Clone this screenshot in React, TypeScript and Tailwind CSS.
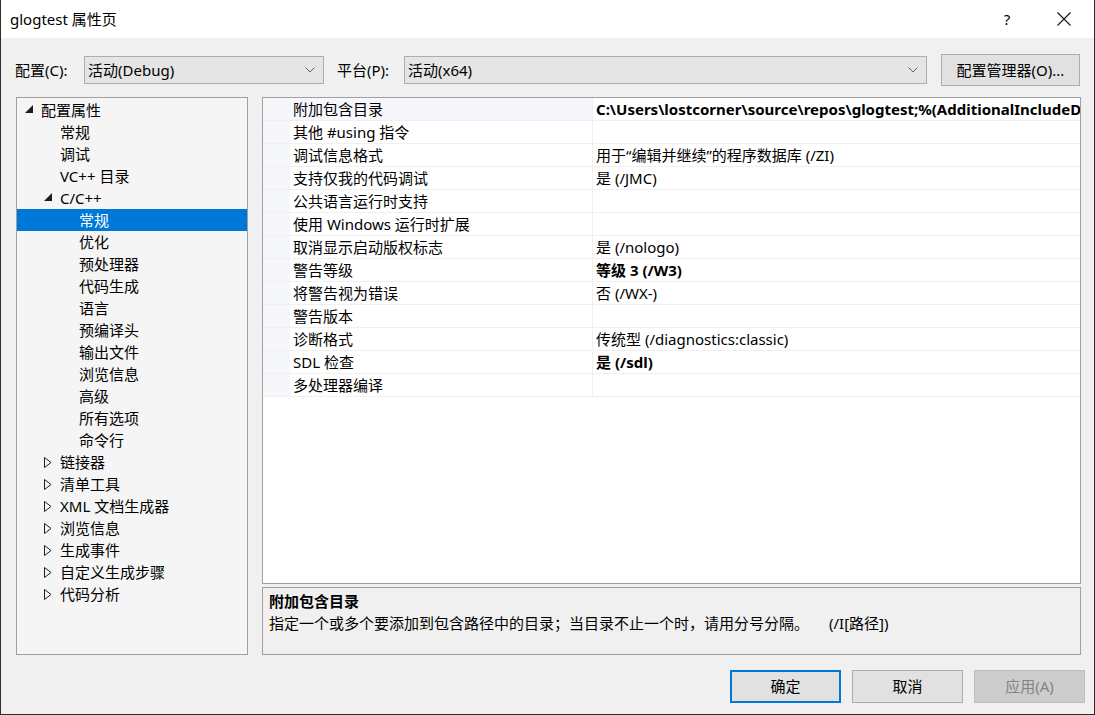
import React from "react";

const font = "font-['Segoe_UI','Noto_Sans','Noto_Sans_CJK_SC',sans-serif]";

type TreeItem = { t: string; pad: string; tri?: "open" | "closed"; sel?: boolean };

const tree: TreeItem[] = [
  { t: "配置属性", pad: "pl-[8px]", tri: "open" },
  { t: "常规", pad: "pl-[43px]" },
  { t: "调试", pad: "pl-[43px]" },
  { t: "VC++ 目录", pad: "pl-[43px]" },
  { t: "C/C++", pad: "pl-[27px]", tri: "open" },
  { t: "常规", pad: "pl-[62px]", sel: true },
  { t: "优化", pad: "pl-[62px]" },
  { t: "预处理器", pad: "pl-[62px]" },
  { t: "代码生成", pad: "pl-[62px]" },
  { t: "语言", pad: "pl-[62px]" },
  { t: "预编译头", pad: "pl-[62px]" },
  { t: "输出文件", pad: "pl-[62px]" },
  { t: "浏览信息", pad: "pl-[62px]" },
  { t: "高级", pad: "pl-[62px]" },
  { t: "所有选项", pad: "pl-[62px]" },
  { t: "命令行", pad: "pl-[62px]" },
  { t: "链接器", pad: "pl-[27px]", tri: "closed" },
  { t: "清单工具", pad: "pl-[27px]", tri: "closed" },
  { t: "XML 文档生成器", pad: "pl-[27px]", tri: "closed" },
  { t: "浏览信息", pad: "pl-[27px]", tri: "closed" },
  { t: "生成事件", pad: "pl-[27px]", tri: "closed" },
  { t: "自定义生成步骤", pad: "pl-[27px]", tri: "closed" },
  { t: "代码分析", pad: "pl-[27px]", tri: "closed" },
];

const props: { name: string; value: string; bold?: boolean }[] = [
  { name: "附加包含目录", value: "C:\\Users\\lostcorner\\source\\repos\\glogtest;%(AdditionalIncludeDirectories)", bold: true },
  { name: "其他 #using 指令", value: "" },
  { name: "调试信息格式", value: "用于“编辑并继续”的程序数据库 (/ZI)" },
  { name: "支持仅我的代码调试", value: "是 (/JMC)" },
  { name: "公共语言运行时支持", value: "" },
  { name: "使用 Windows 运行时扩展", value: "" },
  { name: "取消显示启动版权标志", value: "是 (/nologo)" },
  { name: "警告等级", value: "等级 3 (/W3)", bold: true },
  { name: "将警告视为错误", value: "否 (/WX-)" },
  { name: "警告版本", value: "" },
  { name: "诊断格式", value: "传统型 (/diagnostics:classic)" },
  { name: "SDL 检查", value: "是 (/sdl)", bold: true },
  { name: "多处理器编译", value: "" },
];

function Chevron() {
  return (
    <svg width="10" height="6" viewBox="0 0 10 6" className="shrink-0">
      <polyline points="0.5,0.5 5,5 9.5,0.5" fill="none" stroke="#606060" strokeWidth="1" />
    </svg>
  );
}

function Combo({ text, w }: { text: string; w: string }) {
  return (
    <div className={`${w} h-[28px] flex items-center justify-between bg-[#e5e5e5] border border-[#adadad] pl-[3px] pr-[8px]`}>
      <span>{text}</span>
      <Chevron />
    </div>
  );
}

function Tri({ kind }: { kind?: "open" | "closed" }) {
  if (!kind) return null;
  return (
    <span className="w-[16px] h-[22px] flex items-center shrink-0">
      {kind === "open" ? (
        <svg width="8" height="8" viewBox="0 0 8 8" className="mt-[-2px]">
          <polygon points="8,0 8,8 0,8" fill="#1e1e1e" />
        </svg>
      ) : (
        <svg width="8" height="11" viewBox="0 0 8 11">
          <polygon points="0.5,0.5 7,5.5 0.5,10.5" fill="none" stroke="#1e1e1e" strokeWidth="1" />
        </svg>
      )}
    </span>
  );
}

export default function App() {
  return (
    <div className={`${font} w-[1095px] h-[715px] bg-[#f0f0f0] text-[15px] text-black border-l border-r border-b border-[#2d2d2d] flex flex-col overflow-hidden`}>
      {/* title bar */}
      <div className="h-[38px] bg-white flex items-center shrink-0">
        <span className="ml-[9px] flex-1">glogtest 属性页</span>
        <span className="w-[20px] text-center mr-[40px] text-[15px]">?</span>
        <svg width="14" height="14" viewBox="0 0 14 14" className="mr-[23px]">
          <path d="M0.5 0.5 L13.5 13.5 M13.5 0.5 L0.5 13.5" stroke="#111" strokeWidth="1.1" />
        </svg>
      </div>

      {/* config row */}
      <div className="flex items-center h-[32px] mt-[16px] pl-[14px] shrink-0">
        <span className="w-[69px]">配置(C):</span>
        <Combo text="活动(Debug)" w="w-[240px]" />
        <span className="ml-[13px] w-[67px]">平台(P):</span>
        <Combo text="活动(x64)" w="w-[523px]" />
        <div className="ml-[14px] w-[139px] h-[32px] bg-[#e1e1e1] border border-[#adadad] flex items-center justify-center">
          配置管理器(O)...
        </div>
      </div>

      {/* main */}
      <div className="flex mt-[11px] pl-[15px] h-[558px] shrink-0">
        <div className="w-[232px] h-full border border-[#a0a0a0] bg-[#f5f5f5] py-[1px]">
          {tree.map((it, i) => (
            <div
              key={i}
              className={`h-[22px] flex items-center whitespace-nowrap ${it.pad} ${it.sel ? "bg-[#0078d7] text-white" : ""}`}
            >
              <Tri kind={it.tri} />
              <span>{it.t}</span>
            </div>
          ))}
        </div>

        <div className="ml-[14px] w-[819px] flex flex-col">
          <div className="h-[487px] border border-[#a0a0a0] bg-white overflow-hidden">
            {props.map((p, i) => (
              <div key={i} className="flex h-[23px] border-b border-[#f0f0f0] whitespace-nowrap">
                <div className="w-[27px] bg-[#f5f7fb] shrink-0" />
                <div className={`w-[303px] shrink-0 pl-[3px] flex items-center border-r border-[#f0f0f0] ${i === 0 ? "bg-[#f5f7fb]" : ""}`}>
                  {p.name}
                </div>
                <div className={`flex-1 pl-[3px] flex items-center overflow-hidden ${p.bold ? "font-bold" : ""}`}>
                  {p.value}
                </div>
              </div>
            ))}
          </div>
          <div className="mt-[3px] h-[68px] border border-[#a0a0a0] bg-[#f0f0f0] px-[6px] pt-[2px]">
            <div className="font-bold h-[22px] flex items-center">附加包含目录</div>
            <div className="h-[22px] flex items-center whitespace-nowrap">
              <span>指定一个或多个要添加到包含路径中的目录；当目录不止一个时，请用分号分隔。</span>
              <span className="ml-[20px]">(/I[路径])</span>
            </div>
          </div>
        </div>
      </div>

      {/* buttons */}
      <div className="flex mt-[15px] pl-[729px] gap-[11px] shrink-0">
        <div className="w-[111px] h-[33px] bg-[#e1e1e1] border-2 border-[#0078d7] flex items-center justify-center">确定</div>
        <div className="w-[111px] h-[33px] bg-[#e1e1e1] border border-[#adadad] flex items-center justify-center">取消</div>
        <div className="w-[111px] h-[33px] bg-[#cccccc] border border-[#bfbfbf] text-[#838383] flex items-center justify-center">应用(A)</div>
      </div>
    </div>
  );
}
